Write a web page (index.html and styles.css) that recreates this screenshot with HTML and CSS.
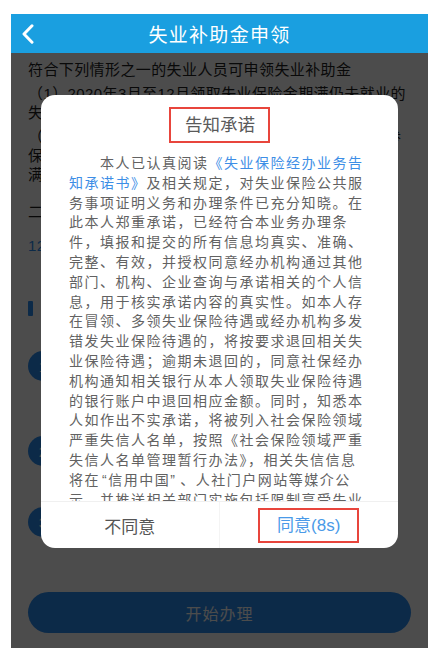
FILE: index.html
```html
<!DOCTYPE html>
<html lang="zh-CN">
<head>
<meta charset="utf-8">
<title>失业补助金申领</title>
<link rel="stylesheet" href="styles.css">
</head>
<body>
<div class="phone">
  <header class="topbar">
    <span class="back">
      <svg width="12" height="20" viewBox="0 0 12 20"><polyline points="10,1.8 2,10 10,18.2" fill="none" stroke="#fff" stroke-width="3" stroke-linecap="round" stroke-linejoin="round"/></svg>
    </span>
    <h1 class="title">失业补助金申领</h1>
    <span></span>
  </header>
  <main class="page">
    <p class="intro">符合下列情形之一的失业人员可申领失业补助金</p>
    <p class="para para-first">（1）2020年3月至12月领取失业保险金期满仍未就业的失业人员；</p>
    <p class="para">（2）2020年1月1日至12月31日期间失业的城镇职工参保缴费不满一年，不符合领取失业保险金条件的人员；满一年但因本人原因中断缴费的失业人员。</p>
    <p class="sub">二、申领期限</p>
    <p class="hint">12月31日前均可线上申领</p>
    <h2 class="section"><span class="bar"></span>办理流程</h2>
    <ol class="steps">
      <li class="step step-first"><span class="dot">1</span><span class="step-text">填写申领信息<br>核对个人身份信息</span></li>
      <li class="step"><span class="dot">2</span><span class="step-text">经办机构审核</span></li>
      <li class="step"><span class="dot">3</span><span class="step-text">按月发放补助金</span></li>
    </ol>
    <button class="start">开始办理</button>

    <div class="overlay">
      <section class="modal">
        <h2 class="modal-title">告知承诺</h2>
        <div class="notice">本人已认真阅读<span class="link">《失业保险经办业务告知承诺书》</span>及相关规定，对失业保险公共服务事项证明义务和办理条件已充分知晓。在此本人郑重承诺，已经符合本业务办理条件，填报和提交的所有信息均真实、准确、完整、有效，并授权同意经办机构通过其他部门、机构、企业查询与承诺相关的个人信息，用于核实承诺内容的真实性。如本人存在冒领、多领失业保险待遇或经办机构多发错发失业保险待遇的，将按要求退回相关失业保险待遇；逾期未退回的，同意社保经办机构通知相关银行从本人领取失业保险待遇的银行账户中退回相应金额。同时，知悉本人如作出不实承诺，将被列入社会保险领域严重失信人名单，按照《社会保险领域严重失信人名单管理暂行办法》，相关失信信息将在<span class="quote">“信用中国”</span>、人社门户网站等媒介公示，并推送相关部门实施包括限制享受失业保险待遇在内的联合惩戒。</div>
        <div class="actions">
          <button class="btn btn-cancel">不同意</button>
          <button class="btn btn-ok"><span class="ok-label">同意(8s)</span></button>
        </div>
      </section>
    </div>
  </main>
</div>
</body>
</html>
```

FILE: styles.css
```css
* { box-sizing: border-box; }

body {
  margin: 0;
  padding: 14px 9px 13px 11px;
  background: #fff;
  font-family: "Liberation Sans", "Noto Sans CJK SC", sans-serif;
}

.phone {
  width: 417px;
  height: 634px;
  display: flex;
  flex-direction: column;
  overflow: hidden;
}

.topbar {
  height: 39px;
  flex-shrink: 0;
  background: #1a9fe0;
  display: grid;
  grid-template-columns: 40px 1fr 40px;
  align-items: center;
}

.back {
  display: flex;
  align-items: center;
  padding-left: 11px;
}

.title {
  margin: 0;
  text-align: center;
  color: #fff;
  font-size: 19px;
  font-weight: normal;
  letter-spacing: 1.3px;
}

.page {
  position: relative;
  flex: 1;
  display: flex;
  flex-direction: column;
  padding: 7px 17px 15px 17px;
  background: #fff;
  color: #1e1e1e;
  font-size: 15px;
  line-height: 19px;
  letter-spacing: 0.4px;
}

.page p { margin: 0; }

.para-first { margin-top: 6px !important; }
.para { margin-top: 5px !important; }

.sub { margin-top: 18px !important; }

.hint {
  margin-top: 15px !important;
  color: #2a8cf0;
}

.section {
  margin: 44px 0 0;
  height: 19px;
  display: flex;
  align-items: center;
  gap: 8px;
  font-size: 16px;
  font-weight: bold;
}

.bar {
  width: 5px;
  height: 15px;
  background: #2a8cf0;
  border-radius: 1px;
}

.steps {
  list-style: none;
  margin: 33px 0 0;
  padding: 0;
}

.step {
  display: flex;
  gap: 12px;
  height: 71px;
}

.step-first { height: 85px; }

.dot {
  width: 30px;
  height: 30px;
  border-radius: 50%;
  background: #2a8cf0;
  color: #fff;
  display: flex;
  align-items: center;
  justify-content: center;
  flex-shrink: 0;
}

.step-text { padding-top: 5px; }

.start {
  margin-top: auto;
  height: 41px;
  border: 0;
  border-radius: 21px;
  background: #2a8cf0;
  color: #fff;
  font-family: inherit;
  font-size: 16px;
  letter-spacing: 1px;
}

/* dialog */
.overlay {
  position: absolute;
  inset: 0;
  background: rgba(0, 0, 0, 0.7);
  display: flex;
  justify-content: center;
  align-items: flex-start;
  padding-top: 42px;
}

.modal {
  width: 357px;
  height: 453px;
  background: #fff;
  border-radius: 14px;
  display: flex;
  flex-direction: column;
  align-items: center;
  padding-top: 12px;
  overflow: hidden;
  letter-spacing: 0;
}

.modal-title {
  margin: 0;
  height: 36px;
  padding: 0 13px 0 14px;
  border: 2px solid #e8453c;
  display: flex;
  align-items: center;
  font-size: 17.5px;
  font-weight: normal;
  color: #5a5a5a;
}

.notice {
  align-self: stretch;
  margin: 11px 34px 0 28px;
  height: 347px;
  overflow: hidden;
  font-size: 14px;
  letter-spacing: 1.5px;
  line-height: 19.8px;
  text-indent: 31px;
  color: #626262;
}

.quote { padding: 0 4px 0 2px; }

.link { color: #3d8ee6; }

.actions {
  align-self: stretch;
  height: 47px;
  border-top: 1px solid #f0f0f0;
  display: grid;
  grid-template-columns: 1fr 1fr;
}

.btn {
  border: 0;
  background: none;
  font-family: inherit;
  font-size: 17px;
  display: flex;
  align-items: center;
  justify-content: center;
  padding: 0;
}

.btn-cancel {
  color: #555;
  border-right: 1px solid #f4f4f4;
}

.ok-label {
  border: 2px solid #e8453c;
  padding: 5px 17px;
  color: #4a9ae8;
  line-height: 21px;
}
```
